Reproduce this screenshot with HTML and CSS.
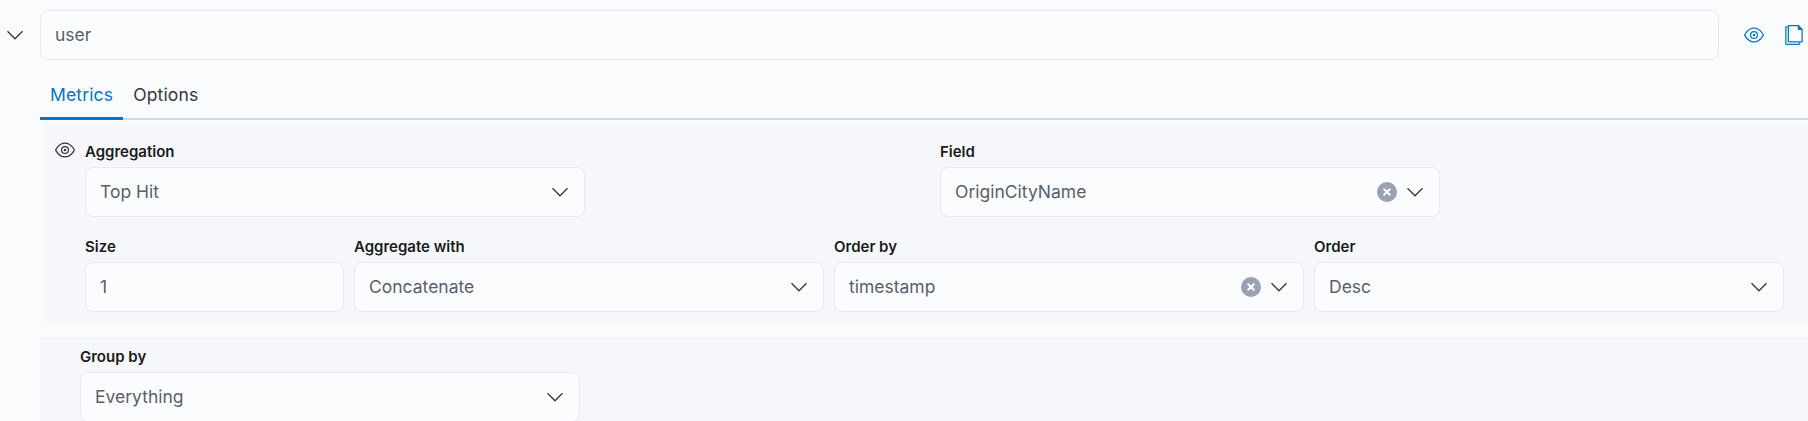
FILE: index.html
```html
<!DOCTYPE html>
<html lang="en">
<head>
    <meta charset="UTF-8">
    <meta name="viewport" content="width=device-width, initial-scale=1.0">
    <title>Metric editor</title>
    <link rel="stylesheet" href="styles.css">
</head>
<body>
    <div class="series-header">
        <svg class="icon toggle" viewBox="0 0 16 16"><polyline class="chevron-line" points="2,5 8,11 14,5"/></svg>
        <div class="control name-input"><span class="value">user</span></div>
        <svg class="icon action-eye" viewBox="0 0 16 16"><path class="eye-blue" fill-rule="evenodd" d="M15.98 7.873c.013.03.02.064.02.098v.06a.24.24 0 01-.02.097C15.952 8.188 13.291 14 8 14S.047 8.188.02 8.128A.24.24 0 010 8.03v-.059c0-.034.007-.068.02-.098C.048 7.813 2.709 2 8 2s7.953 5.813 7.98 5.873zm-1.37-.424a12.097 12.097 0 00-1.385-1.862C11.739 3.956 9.999 3 8 3c-2 0-3.74.956-5.225 2.587a12.098 12.098 0 00-1.701 2.414 12.095 12.095 0 001.7 2.413C4.26 12.043 6.002 13 8 13s3.74-.956 5.225-2.587A12.097 12.097 0 0014.926 8c-.08-.15-.189-.343-.315-.551zM8 4.75A3.253 3.253 0 0111.25 8 3.254 3.254 0 018 11.25 3.253 3.253 0 014.75 8 3.252 3.252 0 018 4.75zm0 1A2.25 2.25 0 005.75 8 2.25 2.25 0 008 10.25 2.25 2.25 0 0010.25 8 2.25 2.25 0 008 5.75zM8 7a1 1 0 11-.001 2.001A1 1 0 018 7z"/></svg>
        <svg class="icon action-copy" viewBox="0 0 16 16"><path class="eye-blue" d="M11.4 0c.235 0 .46.099.622.273l2.743 3c.151.162.235.378.235.602v9.25a.867.867 0 01-.857.875H3.857A.867.867 0 013 13.125V.875C3 .392 3.384 0 3.857 0H11.4zM14 4h-2.6a.4.4 0 01-.4-.4V1H4v12h10V4z"/><path class="eye-blue" d="M3 1H2a1 1 0 00-1 1v13a1 1 0 001 1h10a1 1 0 001-1v-1h-1v1H2V2h1V1z"/></svg>
    </div>

    <div class="tabs">
        <div class="tab active">Metrics</div>
        <div class="tab">Options</div>
    </div>

    <div class="metric-panel">
        <svg class="icon metric-eye" viewBox="0 0 16 16"><path class="eye-dark" fill-rule="evenodd" d="M15.98 7.873c.013.03.02.064.02.098v.06a.24.24 0 01-.02.097C15.952 8.188 13.291 14 8 14S.047 8.188.02 8.128A.24.24 0 010 8.03v-.059c0-.034.007-.068.02-.098C.048 7.813 2.709 2 8 2s7.953 5.813 7.98 5.873zm-1.37-.424a12.097 12.097 0 00-1.385-1.862C11.739 3.956 9.999 3 8 3c-2 0-3.74.956-5.225 2.587a12.098 12.098 0 00-1.701 2.414 12.095 12.095 0 001.7 2.413C4.26 12.043 6.002 13 8 13s3.74-.956 5.225-2.587A12.097 12.097 0 0014.926 8c-.08-.15-.189-.343-.315-.551zM8 4.75A3.253 3.253 0 0111.25 8 3.254 3.254 0 018 11.25 3.253 3.253 0 014.75 8 3.252 3.252 0 018 4.75zm0 1A2.25 2.25 0 005.75 8 2.25 2.25 0 008 10.25 2.25 2.25 0 0010.25 8 2.25 2.25 0 008 5.75zM8 7a1 1 0 11-.001 2.001A1 1 0 018 7z"/></svg>
        <div class="metric-fields">
            <div class="row-top">
                <div class="field">
                    <label class="field-label">Aggregation</label>
                    <div class="control">
                        <span class="value">Top Hit</span>
                        <svg class="icon" viewBox="0 0 16 16"><polyline class="chevron-line" points="2,5 8,11 14,5"/></svg>
                    </div>
                </div>
                <div class="field">
                    <label class="field-label">Field</label>
                    <div class="control">
                        <span class="value">OriginCityName</span>
                        <svg class="icon clear" viewBox="0 0 20 20"><circle class="clear-bg" cx="10" cy="10" r="10"/><path class="clear-x" d="M7.2 7.2l5.6 5.6M12.8 7.2l-5.6 5.6"/></svg>
                        <svg class="icon" viewBox="0 0 16 16"><polyline class="chevron-line" points="2,5 8,11 14,5"/></svg>
                    </div>
                </div>
            </div>
            <div class="row-bottom">
                <div class="field">
                    <label class="field-label">Size</label>
                    <div class="control"><span class="value">1</span></div>
                </div>
                <div class="field">
                    <label class="field-label">Aggregate with</label>
                    <div class="control">
                        <span class="value">Concatenate</span>
                        <svg class="icon" viewBox="0 0 16 16"><polyline class="chevron-line" points="2,5 8,11 14,5"/></svg>
                    </div>
                </div>
                <div class="field">
                    <label class="field-label">Order by</label>
                    <div class="control">
                        <span class="value">timestamp</span>
                        <svg class="icon clear" viewBox="0 0 20 20"><circle class="clear-bg" cx="10" cy="10" r="10"/><path class="clear-x" d="M7.2 7.2l5.6 5.6M12.8 7.2l-5.6 5.6"/></svg>
                        <svg class="icon" viewBox="0 0 16 16"><polyline class="chevron-line" points="2,5 8,11 14,5"/></svg>
                    </div>
                </div>
                <div class="field">
                    <label class="field-label">Order</label>
                    <div class="control">
                        <span class="value">Desc</span>
                        <svg class="icon" viewBox="0 0 16 16"><polyline class="chevron-line" points="2,5 8,11 14,5"/></svg>
                    </div>
                </div>
            </div>
        </div>
    </div>

    <div class="group-panel">
        <div class="field group-field">
            <label class="field-label">Group by</label>
            <div class="control">
                <span class="value">Everything</span>
                <svg class="icon" viewBox="0 0 16 16"><polyline class="chevron-line" points="2,5 8,11 14,5"/></svg>
            </div>
        </div>
    </div>
</body>
</html>
```

FILE: styles.css
```css
html, body {
    height: 421px;
    overflow: hidden;
}
body {
    margin: 0;
    background-color: #fafbfd;
    font-family: Inter, "Noto Sans", sans-serif;
    color: #343741;
}
.icon {
    width: 20px;
    height: 20px;
    flex-shrink: 0;
}
.chevron-line {
    fill: none;
    stroke: #343741;
    stroke-width: 1;
}
.eye-blue {
    fill: #0077cc;
}
.eye-dark {
    fill: #343741;
}
.clear-bg {
    fill: #98a2b3;
}
.clear-x {
    stroke: #fff;
    stroke-width: 2;
    stroke-linecap: round;
}
.clear {
    margin-right: 8px;
}

.control {
    display: flex;
    align-items: center;
    height: 49.5px;
    box-sizing: border-box;
    padding: 0 14px;
    background-color: #fbfcfe;
    border: 1px solid #e6e9f3;
    border-radius: 8px;
    font-size: 17.5px;
    color: #5a5e6b;
}
.value {
    flex: 1;
    padding-bottom: 1px;
}

.series-header {
    display: flex;
    align-items: center;
    padding-top: 10px;
}
.toggle {
    margin: 0 15px 0 5px;
}
.name-input {
    flex: 1;
    height: 50px;
}
.action-eye {
    margin-left: 25px;
}
.action-copy {
    margin: 0 4px 0 20px;
}

.tabs {
    display: flex;
    margin: 10px 0 0 40px;
    height: 50px;
    box-sizing: border-box;
    border-bottom: 2px solid #d3dae6;
}
.tab {
    display: flex;
    align-items: center;
    height: 50px;
    box-sizing: border-box;
    padding: 0 10px 1px;
    font-size: 17.5px;
    letter-spacing: 0.15px;
    color: #343741;
}
.tab.active {
    color: #0077cc;
    box-shadow: inset 0 -3px 0 #0077cc;
}

.metric-panel {
    display: flex;
    gap: 10px;
    margin: 5px 0 0 45px;
    padding: 17px 24px 10.5px 10px;
    background-color: #f5f7fa;
}
.metric-eye {
    margin-top: -2px;
}
.metric-fields {
    flex: 1;
    display: flex;
    flex-direction: column;
    gap: 20.5px;
}
.row-top {
    display: grid;
    grid-template-columns: 1fr 1fr;
    gap: 11px;
}
.row-top .field {
    max-width: 500px;
}
.row-bottom {
    display: grid;
    grid-template-columns: 259px repeat(3, 1fr);
    gap: 10px;
}
.field-label {
    display: block;
    margin-bottom: 5px;
    font-size: 15px;
    line-height: 20px;
    font-weight: 600;
    color: #1a1c21;
}

.group-panel {
    margin: 15px 0 0 40px;
    padding: 10px 40px 0;
    height: 84px;
    box-sizing: border-box;
    background-color: #f5f7fa;
}
.group-field {
    width: 500px;
}
```
